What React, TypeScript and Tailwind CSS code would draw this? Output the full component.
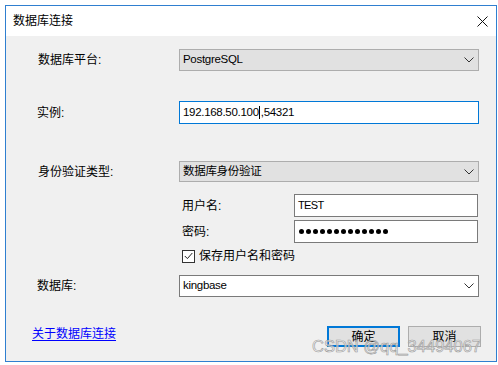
import React from "react";

const ui = "font-['Liberation_Sans','Noto_Sans_CJK_SC',sans-serif]";

function Chevron() {
  return (
    <svg width="10" height="6" viewBox="0 0 10 6" className="mr-[4px] shrink-0">
      <path d="M0.5 0.5 L5 5 L9.5 0.5" fill="none" stroke="#333" strokeWidth="1" />
    </svg>
  );
}

function Combo({ value, editable, h }: { value: string; editable?: boolean; h: string }) {
  return (
    <div
      className={`${h} w-[300px] flex items-center justify-between border ${
        editable ? "bg-white border-[#7a7a7a]" : "bg-[#e1e1e1] border-[#adadad]"
      }`}
    >
      <span className="pl-[3px] text-[11.5px] leading-none text-black tracking-[-0.3px]">{value}</span>
      <Chevron />
    </div>
  );
}

export default function App() {
  return (
    <div className={`w-[498px] h-[365px] bg-white relative overflow-hidden ${ui}`}>
      <div className="ml-[5px] mt-[5px] w-[492px] h-[357px] border border-[#2f7fd0] flex flex-col">
        {/* title bar */}
        <div className="h-[30px] bg-white flex items-center justify-between pl-[7px] pr-[8px] shrink-0">
          <span className="text-[12px] text-black">数据库连接</span>
          <svg width="11" height="11" viewBox="0 0 11 11">
            <path d="M0.5 0.5 L10.5 10.5 M10.5 0.5 L0.5 10.5" stroke="#111" strokeWidth="1" />
          </svg>
        </div>

        <div className="flex-1 bg-[#f0f0f0] flex flex-col">
          {/* platform */}
          <div className="mt-[13px] flex items-center">
            <div className="w-[173px] pl-[32px] text-[12px] text-black">数据库平台:</div>
            <Combo value="PostgreSQL" h="h-[22px]" />
          </div>

          {/* instance */}
          <div className="mt-[30px] flex items-center">
            <div className="w-[173px] pl-[31px] text-[12px] text-black">实例:</div>
            <div className="h-[23px] w-[300px] bg-white border border-[#0078d7] flex items-center pl-[3px] text-[11.5px] tracking-[-0.3px] text-black">
              <span>192.168.50.100</span>
              <span className="w-[1px] h-[13px] bg-black mx-[0.5px]" />
              <span>,54321</span>
            </div>
          </div>

          {/* auth type */}
          <div className="mt-[37px] flex items-center">
            <div className="w-[173px] pl-[32px] text-[12px] text-black">身份验证类型:</div>
            <Combo value="数据库身份验证" h="h-[21px]" />
          </div>

          {/* username */}
          <div className="mt-[12px] flex items-center pl-[176px]">
            <div className="w-[112px] text-[12px] text-black">用户名:</div>
            <div className="h-[23px] w-[184px] bg-white border border-[#7a7a7a] flex items-center pl-[3px] text-[11px] tracking-[-0.6px] text-black">
              TEST
            </div>
          </div>

          {/* password */}
          <div className="mt-[3px] flex items-center pl-[176px]">
            <div className="w-[112px] text-[12px] text-black">密码:</div>
            <div className="h-[23px] w-[184px] bg-white border border-[#7a7a7a] flex items-center pl-[4px] gap-[2px]">
              {Array.from({ length: 13 }).map((_, i) => (
                <span key={i} className="w-[5px] h-[5px] rounded-full bg-black" />
              ))}
            </div>
          </div>

          {/* remember */}
          <div className="mt-[6px] h-[14px] flex items-center pl-[176px] gap-[4px]">
            <div className="w-[13px] h-[13px] border border-[#333] bg-white flex items-center justify-center">
              <svg width="9" height="8" viewBox="0 0 9 8">
                <path d="M0.8 4 L3.4 6.6 L8.3 1" fill="none" stroke="#222" strokeWidth="1" />
              </svg>
            </div>
            <span className="text-[12px] text-black">保存用户名和密码</span>
          </div>

          {/* database */}
          <div className="mt-[12px] flex items-center">
            <div className="w-[173px] pl-[31px] text-[12px] text-black">数据库:</div>
            <Combo value="kingbase" editable h="h-[22px]" />
          </div>

          {/* footer */}
          <div className="mt-[29px] flex items-start pl-[26px] pr-[15px]">
            <a className="text-[12px] leading-[16px] text-[#0000ff] underline underline-offset-2 cursor-pointer">
              关于数据库连接
            </a>
            <div className="ml-auto flex gap-[8px]">
              <button className="h-[21px] w-[73px] bg-[#e1e1e1] border-2 border-[#0078d7] text-[12px] text-black flex items-center justify-center">
                确定
              </button>
              <button className="h-[21px] w-[73px] bg-[#e1e1e1] border border-[#adadad] text-[12px] text-black flex items-center justify-center">
                取消
              </button>
            </div>
          </div>
        </div>
      </div>

      {/* watermark */}
      <div className="absolute left-[312px] top-[338px] text-[16.5px] leading-[16.5px] font-['Liberation_Sans',sans-serif] text-[rgba(240,240,240,0.7)] [-webkit-text-stroke:0.6px_#9a9a9a] whitespace-nowrap pointer-events-none">
        CSDN @qq_34494067
      </div>
    </div>
  );
}
